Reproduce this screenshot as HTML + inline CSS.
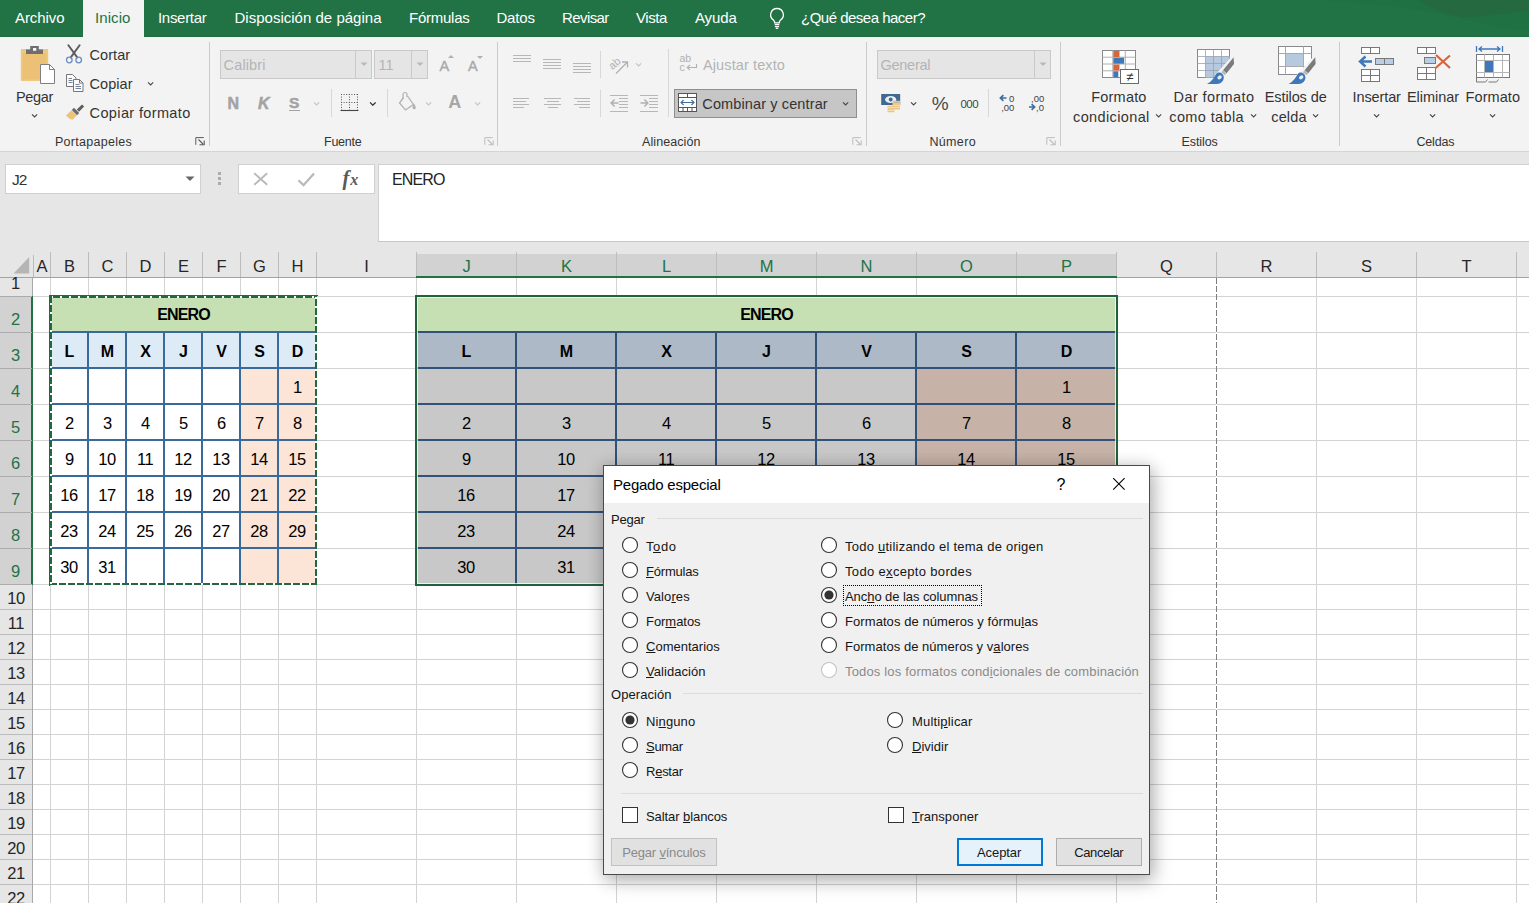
<!DOCTYPE html>
<html lang="es"><head><meta charset="utf-8"><title>Excel - Pegado especial</title><style>
html,body{margin:0;padding:0;overflow:hidden}
html{width:1529px;height:903px}
body{width:1529px;height:903px;overflow:hidden;position:relative;background:#e6e6e6;font-family:"Liberation Sans",sans-serif}
.a{position:absolute;box-sizing:border-box}
.t{position:absolute;white-space:pre;line-height:1}
u{text-decoration:underline;text-underline-offset:1px}
</style></head>
<body>
<div class="a " style="left:0px;top:0px;width:1529px;height:37px;background:#217346;"></div>
<svg class="a" style="left:1300px;top:0px" width="229" height="37" viewBox="0 0 229 37"><path d="M20 0 C60 3 100 6 140 14 C170 20 200 30 229 30 L229 0 Z" fill="#1f7044" opacity=".55"/><path d="M118 0 C130 6 140 15 165 17 C190 18 205 11 229 11 L229 0 Z" fill="#24693f"/></svg>
<div class="a " style="left:0px;top:36px;width:1529px;height:1px;background:#1f6c41;"></div>
<div class="a " style="left:83px;top:0px;width:61px;height:38px;background:#f3f3f3;"></div>
<span class="t" style="left:15.00px;top:10px;font-size:15px;color:#fff;letter-spacing:-0.074px;">Archivo</span>
<span class="t" style="left:95.00px;top:10px;font-size:15px;color:#217346;letter-spacing:0.080px;">Inicio</span>
<span class="t" style="left:158.00px;top:10px;font-size:15px;color:#fff;letter-spacing:-0.295px;">Insertar</span>
<span class="t" style="left:234.50px;top:10px;font-size:15px;color:#fff;letter-spacing:0.011px;">Disposición de página</span>
<span class="t" style="left:409.00px;top:10px;font-size:15px;color:#fff;letter-spacing:-0.252px;">Fórmulas</span>
<span class="t" style="left:496.40px;top:10px;font-size:15px;color:#fff;letter-spacing:-0.158px;">Datos</span>
<span class="t" style="left:562.00px;top:10px;font-size:15px;color:#fff;letter-spacing:-0.593px;">Revisar</span>
<span class="t" style="left:636.00px;top:10px;font-size:15px;color:#fff;letter-spacing:-0.416px;">Vista</span>
<span class="t" style="left:695.00px;top:10px;font-size:15px;color:#fff;letter-spacing:-0.133px;">Ayuda</span>
<span class="t" style="left:801.00px;top:10px;font-size:15px;color:#fff;letter-spacing:-0.506px;">¿Qué desea hacer?</span>
<svg class="a" style="left:767px;top:6px" width="20" height="24" viewBox="0 0 20 24"><path d="M10 2.5a6.3 6.3 0 0 0-3.6 11.5c.9.8 1.3 1.6 1.3 2.8h4.6c0-1.2.4-2 1.3-2.8A6.3 6.3 0 0 0 10 2.5z" fill="none" stroke="#fff" stroke-width="1.3"/><path d="M7.7 18.6h4.6M7.9 20.6h4.2M8.8 22.4h2.4" stroke="#fff" stroke-width="1.1" fill="none"/></svg>
<div class="a " style="left:0px;top:37px;width:1529px;height:114px;background:#f3f3f3;"></div>
<div class="a " style="left:0px;top:151px;width:1529px;height:1px;background:#d4d4d4;"></div>
<div class="a " style="left:209px;top:42px;width:1px;height:104px;background:#cacaca;"></div>
<div class="a " style="left:497px;top:42px;width:1px;height:104px;background:#cacaca;"></div>
<div class="a " style="left:866px;top:42px;width:1px;height:104px;background:#cacaca;"></div>
<div class="a " style="left:1060px;top:42px;width:1px;height:104px;background:#cacaca;"></div>
<div class="a " style="left:1339px;top:42px;width:1px;height:104px;background:#cacaca;"></div>
<svg class="a" style="left:19px;top:44px" width="38" height="42" viewBox="0 0 38 42"><rect x="1.8" y="5" width="27.4" height="32" rx="0.8" fill="#efc87f"/><rect x="3.5" y="9" width="24" height="26.5" fill="#ecc175"/><path d="M7 10V5.400h4.200V2h8.600v3.400H24V10z" fill="#6e6e6e"/><rect x="14" y="4" width="3.300" height="2.800" fill="#f6f6f6"/><path d="M21.500 20.500h9l5 5V39.500h-14z" fill="#fff" stroke="#7f7f7f" stroke-width="1"/><path d="M30.500 20.500v5h5" fill="none" stroke="#7f7f7f" stroke-width="1"/></svg>
<span class="t" style="left:16.00px;top:90px;font-size:14.5px;color:#333333;letter-spacing:-0.338px;">Pegar</span>
<svg class="a" style="left:31.4px;top:113.4px" width="7.2" height="5.2" viewBox="0 0 7.2 5.2"><path d="M1 1.3 L3.6 3.9 L6.2 1.3" fill="none" stroke="#444" stroke-width="1.1"/></svg>
<svg class="a" style="left:65px;top:44px" width="19" height="20" viewBox="0 0 19 20"><path d="M3.400 1.200L12.200 13.400M14.600 1.200L5.800 13.400" stroke="#5c5c5c" stroke-width="1.900" fill="none" stroke-linecap="round"/><circle cx="4.300" cy="16" r="2.800" fill="none" stroke="#6b8cc0" stroke-width="1.300"/><circle cx="13.700" cy="16" r="2.800" fill="none" stroke="#6b8cc0" stroke-width="1.300"/></svg>
<span class="t" style="left:89.60px;top:48px;font-size:14.5px;color:#333333;letter-spacing:0.036px;">Cortar</span>
<svg class="a" style="left:65px;top:73px" width="20" height="20" viewBox="0 0 20 20"><path d="M1.500 1.500h6l3.500 3.500v8.500h-9.500z" fill="#fbfbfb" stroke="#777" stroke-width="1"/><path d="M3.500 5.500h3.500M3.500 7.500h4M3.500 9.500h4" stroke="#73849a" stroke-width="1"/><path d="M8.500 6.500h6l3.500 3.500v8.500h-9.500z" fill="#fbfbfb" stroke="#777" stroke-width="1"/><path d="M14.500 6.500v3.500h3.500" fill="none" stroke="#777" stroke-width="1"/><path d="M10.500 11.500h4M10.500 13.500h5.500M10.500 15.500h5.500" stroke="#73849a" stroke-width="1"/></svg>
<span class="t" style="left:89.60px;top:77px;font-size:14.5px;color:#333333;letter-spacing:0.048px;">Copiar</span>
<svg class="a" style="left:147.4px;top:81.4px" width="7.2" height="5.2" viewBox="0 0 7.2 5.2"><path d="M1 1.3 L3.6 3.9 L6.2 1.3" fill="none" stroke="#444" stroke-width="1.1"/></svg>
<svg class="a" style="left:65px;top:103px" width="20" height="18" viewBox="0 0 20 18"><path d="M11.800 6.600l5.200-5.200 2.200 2.200-5.200 5.200z" fill="#5f5f5f"/><path d="M9 4.800l5.200 5.200-2.200 2.200-5.200-5.200z" fill="#6a6a6a"/><path d="M6.600 7.200l5.200 5.200-4.300 4.300c-2-.3-4.500-2-6.500-4.300z" fill="#ecc377"/></svg>
<span class="t" style="left:89.60px;top:106px;font-size:14.5px;color:#333333;letter-spacing:0.365px;">Copiar formato</span>
<span class="t" style="left:55.00px;top:136px;font-size:12.5px;color:#333333;letter-spacing:0.277px;">Portapapeles</span>
<svg class="a" style="left:195px;top:137px" width="10" height="9" viewBox="0 0 10 9"><path d="M0.800 7.800V0.600H8.800" fill="none" stroke="#5a5a5a" stroke-width="1"/><path d="M3.500 2.500L8 7M9.200 3.500V7.700H4.500" fill="none" stroke="#5a5a5a" stroke-width="1.100"/></svg>
<div class="a " style="left:220px;top:50px;width:152px;height:29px;background:#e5e5e5;border:1px solid #c9c9c9"></div>
<div class="a " style="left:355px;top:51px;width:1px;height:27px;background:#c9c9c9;"></div>
<span class="t" style="left:223.60px;top:58px;font-size:14.5px;color:#b4b4b4;letter-spacing:0.129px;">Calibri</span>
<svg class="a" style="left:360px;top:62px" width="8" height="5" viewBox="0 0 8 5"><path d="M0.5 0.5h7l-3.5 3.5z" fill="#b9b9b9"/></svg>
<div class="a " style="left:374px;top:50px;width:54px;height:29px;background:#e5e5e5;border:1px solid #c9c9c9"></div>
<div class="a " style="left:411px;top:51px;width:1px;height:27px;background:#c9c9c9;"></div>
<span class="t" style="left:378.50px;top:58px;font-size:14.5px;color:#b4b4b4;letter-spacing:-0.025px;">11</span>
<svg class="a" style="left:416px;top:62px" width="8" height="5" viewBox="0 0 8 5"><path d="M0.5 0.5h7l-3.5 3.5z" fill="#b9b9b9"/></svg>
<span class="t" style="left:439.50px;top:59px;font-size:14.5px;color:#a9a9a9;-webkit-text-stroke:0.4px #a9a9a9;">A</span>
<svg class="a" style="left:448px;top:55px" width="6" height="3" viewBox="0 0 6 3"><path d="M0 3L3 0L6 3z" fill="#b1b1b1"/></svg>
<span class="t" style="left:468.00px;top:59px;font-size:14.5px;color:#a9a9a9;-webkit-text-stroke:0.4px #a9a9a9;">A</span>
<svg class="a" style="left:476.5px;top:56px" width="6" height="3" viewBox="0 0 6 3"><path d="M0 0L3 3L6 0z" fill="#b1b1b1"/></svg>
<span class="t" style="left:227.50px;top:96px;font-size:16px;color:#a3a3a3;font-weight:bold;-webkit-text-stroke:0.5px #a3a3a3;">N</span>
<span class="t" style="left:258.00px;top:96px;font-size:16px;color:#a3a3a3;font-weight:bold;font-style:italic;-webkit-text-stroke:0.5px #a3a3a3;">K</span>
<span class="t" style="left:289.00px;top:95px;font-size:15.5px;color:#a3a3a3;font-weight:bold;-webkit-text-stroke:0.5px #a3a3a3;">S</span>
<div class="a " style="left:288.5px;top:109.5px;width:11px;height:1.5px;background:#a3a3a3;"></div>
<svg class="a" style="left:313.4px;top:100.9px" width="7.2" height="5.2" viewBox="0 0 7.2 5.2"><path d="M1 1.3 L3.6 3.9 L6.2 1.3" fill="none" stroke="#c4c4c4" stroke-width="1.1"/></svg>
<div class="a " style="left:331px;top:89px;width:1px;height:28px;background:#d8d8d8;"></div>
<svg class="a" style="left:340px;top:93px" width="19" height="19" viewBox="0 0 19 19"><path d="M1 1.5h17M1 9.5h17M1.5 1v17M9.5 1v17M17.5 1v17" stroke="#555" stroke-width="1" stroke-dasharray="1 1.6" fill="none"/><path d="M0.5 17.500h18" stroke="#444" stroke-width="1.100"/></svg>
<svg class="a" style="left:368.8px;top:100.7px" width="7.6" height="5.6" viewBox="0 0 7.6 5.6"><path d="M1 1.4 L3.8 4.2 L6.6 1.4" fill="none" stroke="#333" stroke-width="1.3"/></svg>
<div class="a " style="left:387px;top:89px;width:1px;height:28px;background:#d8d8d8;"></div>
<svg class="a" style="left:397px;top:91px" width="20" height="22" viewBox="0 0 20 22"><path d="M6.5 6.5l-4 5.5 6 7 8-5.5-6-8.5" fill="none" stroke="#b1b1b1" stroke-width="1.3"/><path d="M6 8V3.5a2 2 0 0 1 4 0V6" fill="none" stroke="#b1b1b1" stroke-width="1.2"/><path d="M16.8 12.5c1.4 2 2 3.2 2 4.2a1.6 1.6 0 0 1-3.2 0c0-1 .4-2.2 1.2-4.2z" fill="#b1b1b1"/></svg>
<svg class="a" style="left:424.9px;top:100.9px" width="7.2" height="5.2" viewBox="0 0 7.2 5.2"><path d="M1 1.3 L3.6 3.9 L6.2 1.3" fill="none" stroke="#c4c4c4" stroke-width="1.1"/></svg>
<span class="t" style="left:448.20px;top:93px;font-size:18px;color:#a6a6a6;font-weight:bold;">A</span>
<svg class="a" style="left:473.9px;top:100.9px" width="7.2" height="5.2" viewBox="0 0 7.2 5.2"><path d="M1 1.3 L3.6 3.9 L6.2 1.3" fill="none" stroke="#c4c4c4" stroke-width="1.1"/></svg>
<span class="t" style="left:324.00px;top:136px;font-size:12.5px;color:#333333;letter-spacing:-0.237px;">Fuente</span>
<svg class="a" style="left:484px;top:137px" width="10" height="9" viewBox="0 0 10 9"><path d="M0.800 7.800V0.600H8.800" fill="none" stroke="#bdbdbd" stroke-width="1"/><path d="M3.500 2.500L8 7M9.200 3.500V7.700H4.500" fill="none" stroke="#bdbdbd" stroke-width="1.100"/></svg>
<div class="a " style="left:513px;top:55px;width:18px;height:1px;background:#b7b7b7;"></div>
<div class="a " style="left:513px;top:58px;width:18px;height:1px;background:#b7b7b7;"></div>
<div class="a " style="left:513px;top:61px;width:18px;height:1px;background:#b7b7b7;"></div>
<div class="a " style="left:543px;top:59px;width:18px;height:1px;background:#b7b7b7;"></div>
<div class="a " style="left:543px;top:62px;width:18px;height:1px;background:#b7b7b7;"></div>
<div class="a " style="left:543px;top:65px;width:18px;height:1px;background:#b7b7b7;"></div>
<div class="a " style="left:543px;top:68px;width:18px;height:1px;background:#b7b7b7;"></div>
<div class="a " style="left:573px;top:63px;width:18px;height:1px;background:#b7b7b7;"></div>
<div class="a " style="left:573px;top:66px;width:18px;height:1px;background:#b7b7b7;"></div>
<div class="a " style="left:573px;top:69px;width:18px;height:1px;background:#b7b7b7;"></div>
<div class="a " style="left:573px;top:72px;width:18px;height:1px;background:#b7b7b7;"></div>
<div class="a " style="left:600px;top:51px;width:1px;height:27px;background:#d8d8d8;"></div>
<svg class="a" style="left:607px;top:52px" width="24" height="23" viewBox="0 0 24 23"><text x="2" y="15" font-family="Liberation Sans,sans-serif" font-size="11" fill="#b1b1b1" transform="rotate(-42 8 12)">ab</text><path d="M9 21.500L20 10.500M15 10h5.500v5.500" stroke="#b1b1b1" stroke-width="1.300" fill="none"/></svg>
<svg class="a" style="left:635.4px;top:61.9px" width="7.2" height="5.2" viewBox="0 0 7.2 5.2"><path d="M1 1.3 L3.6 3.9 L6.2 1.3" fill="none" stroke="#c4c4c4" stroke-width="1.1"/></svg>
<div class="a " style="left:668px;top:49px;width:1px;height:68px;background:#d8d8d8;"></div>
<svg class="a" style="left:679px;top:53px" width="20" height="21" viewBox="0 0 20 21"><text x="0.5" y="9" font-family="Liberation Sans,sans-serif" font-size="10.5" fill="#b1b1b1">ab</text><text x="0.5" y="18" font-family="Liberation Sans,sans-serif" font-size="10.5" fill="#b1b1b1">c</text><path d="M17.500 11v3.500h-9M11 12l-2.800 2.500 2.800 2.500" stroke="#b1b1b1" stroke-width="1.100" fill="none"/></svg>
<span class="t" style="left:703.00px;top:58px;font-size:14.5px;color:#b4b4b4;letter-spacing:0.109px;">Ajustar texto</span>
<div class="a " style="left:513px;top:98px;width:16px;height:1px;background:#b7b7b7;"></div>
<div class="a " style="left:513px;top:101px;width:13px;height:1px;background:#b7b7b7;"></div>
<div class="a " style="left:513px;top:104px;width:16px;height:1px;background:#b7b7b7;"></div>
<div class="a " style="left:513px;top:107px;width:11px;height:1px;background:#b7b7b7;"></div>
<div class="a " style="left:544px;top:98px;width:17px;height:1px;background:#b7b7b7;"></div>
<div class="a " style="left:546.5px;top:101px;width:12px;height:1px;background:#b7b7b7;"></div>
<div class="a " style="left:544px;top:104px;width:17px;height:1px;background:#b7b7b7;"></div>
<div class="a " style="left:547.5px;top:107px;width:10px;height:1px;background:#b7b7b7;"></div>
<div class="a " style="left:574px;top:98px;width:16px;height:1px;background:#b7b7b7;"></div>
<div class="a " style="left:577px;top:101px;width:13px;height:1px;background:#b7b7b7;"></div>
<div class="a " style="left:574px;top:104px;width:16px;height:1px;background:#b7b7b7;"></div>
<div class="a " style="left:579px;top:107px;width:11px;height:1px;background:#b7b7b7;"></div>
<div class="a " style="left:600px;top:90px;width:1px;height:27px;background:#d8d8d8;"></div>
<div class="a " style="left:610px;top:95px;width:18px;height:1px;background:#b7b7b7;"></div>
<div class="a " style="left:610px;top:111px;width:18px;height:1px;background:#b7b7b7;"></div>
<div class="a " style="left:619px;top:98px;width:9px;height:1px;background:#b7b7b7;"></div>
<div class="a " style="left:619px;top:101px;width:9px;height:1px;background:#b7b7b7;"></div>
<div class="a " style="left:619px;top:104px;width:9px;height:1px;background:#b7b7b7;"></div>
<div class="a " style="left:619px;top:107px;width:9px;height:1px;background:#b7b7b7;"></div>
<svg class="a" style="left:610px;top:98px" width="9" height="10" viewBox="0 0 9 10"><path d="M8.5 5H1.8M4.6 1.5L1.2 5l3.4 3.5" stroke="#b1b1b1" stroke-width="1.6" fill="none"/></svg>
<div class="a " style="left:640px;top:95px;width:18px;height:1px;background:#b7b7b7;"></div>
<div class="a " style="left:640px;top:111px;width:18px;height:1px;background:#b7b7b7;"></div>
<div class="a " style="left:649px;top:98px;width:9px;height:1px;background:#b7b7b7;"></div>
<div class="a " style="left:649px;top:101px;width:9px;height:1px;background:#b7b7b7;"></div>
<div class="a " style="left:649px;top:104px;width:9px;height:1px;background:#b7b7b7;"></div>
<div class="a " style="left:649px;top:107px;width:9px;height:1px;background:#b7b7b7;"></div>
<svg class="a" style="left:640px;top:98px" width="9" height="10" viewBox="0 0 9 10"><path d="M0.5 5h6.7M4.4 1.5L7.8 5 4.4 8.5" stroke="#b1b1b1" stroke-width="1.6" fill="none"/></svg>
<div class="a " style="left:674px;top:89px;width:183px;height:29px;background:#c6c6c6;border:1px solid #8f8f8f"></div>
<svg class="a" style="left:678px;top:93px" width="19" height="19" viewBox="0 0 19 19"><rect x="0.5" y="0.5" width="18" height="18" fill="#fff" stroke="#555" stroke-width="1"/><path d="M0.5 4.5h18M0.5 14.5h18M9.5 0.5v4M9.5 14.5v4M5 14.5v4M14 14.5v4" stroke="#555" stroke-width="1" fill="none"/><path d="M3 9.5h13M5.6 7L3 9.5 5.6 12M13.4 7L16 9.5 13.4 12" stroke="#3f6f9f" stroke-width="1.1" fill="none"/></svg>
<span class="t" style="left:702.30px;top:97px;font-size:14.5px;color:#333333;letter-spacing:0.123px;">Combinar y centrar</span>
<svg class="a" style="left:842.4px;top:100.9px" width="7.2" height="5.2" viewBox="0 0 7.2 5.2"><path d="M1 1.3 L3.6 3.9 L6.2 1.3" fill="none" stroke="#444" stroke-width="1.1"/></svg>
<span class="t" style="left:642.00px;top:136px;font-size:12.5px;color:#333333;letter-spacing:0.082px;">Alineación</span>
<svg class="a" style="left:852px;top:137px" width="10" height="9" viewBox="0 0 10 9"><path d="M0.800 7.800V0.600H8.800" fill="none" stroke="#bdbdbd" stroke-width="1"/><path d="M3.500 2.500L8 7M9.200 3.500V7.700H4.500" fill="none" stroke="#bdbdbd" stroke-width="1.100"/></svg>
<div class="a " style="left:877px;top:50px;width:174px;height:29px;background:#e5e5e5;border:1px solid #c9c9c9"></div>
<div class="a " style="left:1034px;top:51px;width:1px;height:27px;background:#c9c9c9;"></div>
<span class="t" style="left:880.60px;top:58px;font-size:14.5px;color:#b4b4b4;letter-spacing:-0.297px;">General</span>
<svg class="a" style="left:1039px;top:62px" width="8" height="5" viewBox="0 0 8 5"><path d="M0.5 0.5h7l-3.5 3.5z" fill="#b9b9b9"/></svg>
<svg class="a" style="left:880px;top:93px" width="22" height="21" viewBox="0 0 22 21"><rect x="1.200" y="1" width="19" height="11" fill="#41688f"/><ellipse cx="10.700" cy="6.500" rx="5.600" ry="3.600" fill="#e9eef4"/><circle cx="10.700" cy="6.500" r="1.900" fill="#41688f"/><path d="M12.500 8.600h7.500M12.500 11h7.500M12.500 13.400h7.500M12.500 15.600h7.500" stroke="#edc581" stroke-width="1.900"/><path d="M12.500 9.800h7.500M12.500 12.200h7.500M12.500 14.500h7.500" stroke="#f7e3bd" stroke-width="0.600"/><path d="M7.500 13.600h7M7.500 16h7M7.500 18.400h7" stroke="#edc581" stroke-width="1.900"/><path d="M7.500 14.800h7M7.500 17.200h7" stroke="#f7e3bd" stroke-width="0.600"/></svg>
<svg class="a" style="left:910.1px;top:100.9px" width="7.2" height="5.2" viewBox="0 0 7.2 5.2"><path d="M1 1.3 L3.6 3.9 L6.2 1.3" fill="none" stroke="#444" stroke-width="1.1"/></svg>
<span class="t" style="left:931.80px;top:94px;font-size:19px;color:#4a4a4a;">%</span>
<span class="t" style="left:960.40px;top:99px;font-size:11.5px;color:#444;letter-spacing:-0.528px;">000</span>
<div class="a " style="left:988px;top:89px;width:1px;height:28px;background:#d8d8d8;"></div>
<svg class="a" style="left:999px;top:94px" width="17" height="19" viewBox="0 0 17 19"><path d="M7.5 4H2M4.4 1.2L1.4 4l3 2.8" stroke="#3d6d9e" stroke-width="1.7" fill="none"/><text x="10" y="7.500" font-family="Liberation Sans,sans-serif" font-size="9.500" fill="#444">0</text><text x="2.200" y="16.600" font-family="Liberation Sans,sans-serif" font-size="9.500" fill="#444">,00</text></svg>
<svg class="a" style="left:1028px;top:94px" width="17" height="19" viewBox="0 0 17 19"><text x="3" y="7.500" font-family="Liberation Sans,sans-serif" font-size="9.500" fill="#444">,00</text><path d="M1 13h5.500M3.600 10.200l3 2.800-3 2.800" stroke="#3d6d9e" stroke-width="1.7" fill="none"/><text x="8" y="16.600" font-family="Liberation Sans,sans-serif" font-size="9.500" fill="#444">,0</text></svg>
<span class="t" style="left:929.40px;top:136px;font-size:12.5px;color:#333333;letter-spacing:0.356px;">Número</span>
<svg class="a" style="left:1046px;top:137px" width="10" height="9" viewBox="0 0 10 9"><path d="M0.800 7.800V0.600H8.800" fill="none" stroke="#bdbdbd" stroke-width="1"/><path d="M3.500 2.500L8 7M9.200 3.500V7.700H4.500" fill="none" stroke="#bdbdbd" stroke-width="1.100"/></svg>
<svg class="a" style="left:1101px;top:49px" width="40" height="36" viewBox="0 0 40 36"><rect x="1.500" y="1.500" width="33" height="27" fill="#fff" stroke="#8a8a8a" stroke-width="1"/><path d="M1.500 8.200h33M1.500 15h33M1.500 21.800h33M11.800 1.500v27M24.300 1.500v27" stroke="#b0b0b0" stroke-width="1" fill="none"/><rect x="12.300" y="2" width="6.200" height="6" fill="#d9643a"/><rect x="12.300" y="8.700" width="10.800" height="6" fill="#3f78b8"/><rect x="12.300" y="15.500" width="6.200" height="6" fill="#d9643a"/><rect x="12.300" y="22.300" width="5" height="6" fill="#3f78b8"/><rect x="19.500" y="20.500" width="18" height="14" fill="#fff" stroke="#6a6a6a" stroke-width="1"/><text x="28.800" y="32" text-anchor="middle" font-family="Liberation Sans,sans-serif" font-size="13" fill="#333">≠</text></svg>
<span class="t" style="left:1091.30px;top:90px;font-size:14.5px;color:#333333;letter-spacing:0.189px;">Formato</span>
<span class="t" style="left:1073.00px;top:110px;font-size:14.5px;color:#333333;letter-spacing:0.378px;">condicional</span>
<svg class="a" style="left:1155.4px;top:112.9px" width="7.2" height="5.2" viewBox="0 0 7.2 5.2"><path d="M1 1.3 L3.6 3.9 L6.2 1.3" fill="none" stroke="#444" stroke-width="1.1"/></svg>
<svg class="a" style="left:1196px;top:47px" width="40" height="38" viewBox="0 0 40 38"><rect x="1.500" y="2.500" width="32" height="28" fill="#fff" stroke="#8a8a8a" stroke-width="1"/><rect x="9.500" y="9.500" width="24" height="21" fill="#b7c9de"/><path d="M1.500 9.500h32M1.500 16.500h32M1.500 23.500h32M9.500 2.500v28M17.500 2.500v28M25.500 2.500v28" stroke="#97a3b0" stroke-width="1" fill="none" opacity=".8"/><path d="M19 28 L38 7 L40 7 L40 38 Z" fill="#f3f3f3"/><path d="M37.6 10.3L38 17L30.6 26.2L27 23.2 Z" fill="#7b7b7b"/><path d="M27 23.2L30.6 26.2L28.8 28.2L25.2 25.2 Z" fill="#b9b9b9"/><path d="M11 37 C15 35 18 31 20.5 26.5 C23 24.2 27.8 26.5 27.8 30.5 C27.8 34 25 37 21 37 Z" fill="#3f78b8"/><ellipse cx="23.6" cy="30.4" rx="2.300" ry="1.800" fill="#e6eef7" transform="rotate(-35 23.6 30.4)"/></svg>
<span class="t" style="left:1173.60px;top:90px;font-size:14.5px;color:#333333;letter-spacing:0.387px;">Dar formato</span>
<span class="t" style="left:1169.30px;top:110px;font-size:14.5px;color:#333333;letter-spacing:0.378px;">como tabla</span>
<svg class="a" style="left:1250.4px;top:112.9px" width="7.2" height="5.2" viewBox="0 0 7.2 5.2"><path d="M1 1.3 L3.6 3.9 L6.2 1.3" fill="none" stroke="#444" stroke-width="1.1"/></svg>
<svg class="a" style="left:1277px;top:44px" width="42" height="41" viewBox="0 0 42 41"><rect x="1.500" y="2.500" width="33" height="28" fill="#fff" stroke="#8a8a8a" stroke-width="1"/><path d="M1.500 9.500h33M1.500 22.500h33M8.500 2.500v28M26.500 2.500v28" stroke="#a9a9a9" stroke-width="1" fill="none"/><rect x="9" y="10" width="17" height="12" fill="#b7c9de"/><path d="M19.6 31 L38.6 10 L40.6 10 L40.6 41 Z" fill="#f3f3f3"/><path d="M38.2 13.3L38.6 20L31.2 29.2L27.6 26.2 Z" fill="#7b7b7b"/><path d="M27.6 26.2L31.2 29.2L29.4 31.2L25.8 28.2 Z" fill="#b9b9b9"/><path d="M11.6 40 C15.6 38 18.6 34 21.1 29.5 C23.6 27.2 28.4 29.5 28.4 33.5 C28.4 37 25.6 40 21.6 40 Z" fill="#3f78b8"/><ellipse cx="24.2" cy="33.4" rx="2.300" ry="1.800" fill="#e6eef7" transform="rotate(-35 24.2 33.4)"/></svg>
<span class="t" style="left:1264.80px;top:90px;font-size:14.5px;color:#333333;letter-spacing:-0.106px;">Estilos de</span>
<span class="t" style="left:1271.30px;top:110px;font-size:14.5px;color:#333333;letter-spacing:0.128px;">celda</span>
<svg class="a" style="left:1312.2px;top:112.9px" width="7.2" height="5.2" viewBox="0 0 7.2 5.2"><path d="M1 1.3 L3.6 3.9 L6.2 1.3" fill="none" stroke="#444" stroke-width="1.1"/></svg>
<span class="t" style="left:1181.50px;top:136px;font-size:12.5px;color:#333333;letter-spacing:-0.088px;">Estilos</span>
<svg class="a" style="left:1357px;top:46px" width="38" height="37" viewBox="0 0 38 37"><rect x="4.5" y="1.5" width="18" height="6" fill="#fff" stroke="#787878"/><path d="M13.5 1.5v6" stroke="#787878"/><rect x="18.5" y="12.5" width="18" height="6" fill="#b9cde5" stroke="#787878"/><path d="M27.5 12.5v6" stroke="#787878"/><rect x="4.5" y="23.5" width="18" height="12" fill="#fff" stroke="#787878"/><path d="M13.5 23.5v12M4.5 29.5h18" stroke="#787878" fill="none"/><path d="M15 15.5H4M8.5 10.5L3 15.5l5.500 5" stroke="#3f78b8" stroke-width="2.4" fill="none"/></svg>
<span class="t" style="left:1352.50px;top:90px;font-size:14.5px;color:#333333;letter-spacing:-0.106px;">Insertar</span>
<svg class="a" style="left:1373.4px;top:112.9px" width="7.2" height="5.2" viewBox="0 0 7.2 5.2"><path d="M1 1.3 L3.6 3.9 L6.2 1.3" fill="none" stroke="#444" stroke-width="1.1"/></svg>
<svg class="a" style="left:1416px;top:46px" width="38" height="37" viewBox="0 0 38 37"><rect x="1.500" y="1.5" width="18" height="6" fill="#fff" stroke="#787878"/><path d="M10.5 1.5v6" stroke="#787878"/><rect x="8.5" y="11.5" width="11" height="6" fill="#b9cde5" stroke="#787878"/><rect x="1.5" y="21.5" width="18" height="12" fill="#fff" stroke="#787878"/><path d="M10.5 21.5v12M1.5 27.5h18" stroke="#787878" fill="none"/><path d="M20 9l14 13M34 9.500L19 22.500" stroke="#d9643a" stroke-width="2.2" fill="none"/></svg>
<span class="t" style="left:1406.90px;top:90px;font-size:14.5px;color:#333333;letter-spacing:-0.009px;">Eliminar</span>
<svg class="a" style="left:1429.4px;top:112.9px" width="7.2" height="5.2" viewBox="0 0 7.2 5.2"><path d="M1 1.3 L3.6 3.9 L6.2 1.3" fill="none" stroke="#444" stroke-width="1.1"/></svg>
<svg class="a" style="left:1475px;top:45px" width="36" height="39" viewBox="0 0 36 39"><path d="M1.500 1v6M27.500 1v6M4 4h21M7 1.500L4 4l3 2.500M22 1.500L25 4l-3 2.500" stroke="#3f78b8" stroke-width="1.300" fill="none"/><rect x="1.500" y="9.500" width="33" height="23" fill="#fff" stroke="#787878"/><path d="M9.500 9.500v23M18.500 9.500v23M27.500 9.500v23M1.500 15.500h33M1.500 27.500h33" stroke="#b5b5b5" fill="none"/><rect x="10" y="16" width="8" height="11" fill="#3f78b8"/><path d="M1.500 32.500v4.500h9l2-2.500M13.500 37h8l2-2.500" stroke="#787878" fill="none"/></svg>
<span class="t" style="left:1465.60px;top:90px;font-size:14.5px;color:#333333;letter-spacing:0.060px;">Formato</span>
<svg class="a" style="left:1489.1px;top:112.9px" width="7.2" height="5.2" viewBox="0 0 7.2 5.2"><path d="M1 1.3 L3.6 3.9 L6.2 1.3" fill="none" stroke="#444" stroke-width="1.1"/></svg>
<span class="t" style="left:1416.40px;top:136px;font-size:12.5px;color:#333333;letter-spacing:-0.152px;">Celdas</span>
<div class="a " style="left:5px;top:164px;width:196px;height:30px;background:#fff;border:1px solid #d0d0d0"></div>
<span class="t" style="left:12.00px;top:172px;font-size:15.5px;color:#333;letter-spacing:-0.886px;">J2</span>
<svg class="a" style="left:185px;top:176px" width="10" height="6" viewBox="0 0 10 6"><path d="M0.5 0.5h9l-4.5 4.5z" fill="#666"/></svg>
<div class="a " style="left:218px;top:172px;width:3px;height:3px;background:#ababab;"></div>
<div class="a " style="left:218px;top:177px;width:3px;height:3px;background:#ababab;"></div>
<div class="a " style="left:218px;top:182px;width:3px;height:3px;background:#ababab;"></div>
<div class="a " style="left:238px;top:164px;width:137px;height:30px;background:#fff;border:1px solid #d0d0d0"></div>
<svg class="a" style="left:253px;top:172px" width="16" height="14" viewBox="0 0 16 14"><path d="M1.200 1.200l13 11.600M14.200 1.200l-13 11.600" stroke="#b9b9b9" stroke-width="1.900" fill="none"/></svg>
<svg class="a" style="left:297px;top:172px" width="19" height="15" viewBox="0 0 19 15"><path d="M1.500 8.200l5 5L17 1.500" stroke="#b9b9b9" stroke-width="2.300" fill="none"/></svg>
<span class="t" style="left:342.50px;top:168px;font-size:20.5px;color:#5a5a5a;font-weight:bold;font-style:italic;font-family:'Liberation Serif',serif;">f</span>
<span class="t" style="left:350.30px;top:172px;font-size:16px;color:#5a5a5a;font-weight:bold;font-style:italic;font-family:'Liberation Serif',serif;">x</span>
<div class="a " style="left:378px;top:164px;width:1151px;height:77px;background:#fff;border-left:1px solid #d0d0d0;border-top:1px solid #d0d0d0"></div>
<span class="t" style="left:392.00px;top:172px;font-size:16px;color:#222;letter-spacing:-0.880px;">ENERO</span>
<div class="a " style="left:0px;top:254px;width:1529px;height:649px;background:#fff;"></div>
<div class="a " style="left:0px;top:254px;width:1529px;height:24px;background:#e6e6e6;"></div>
<div class="a " style="left:0px;top:254px;width:33px;height:649px;background:#e6e6e6;"></div>
<div class="a " style="left:416px;top:254px;width:701px;height:23px;background:#d2d2d2;"></div>
<div class="a " style="left:416px;top:276px;width:701px;height:2px;background:#217346;"></div>
<div class="a " style="left:0px;top:296px;width:32px;height:289px;background:#d2d2d2;"></div>
<div class="a " style="left:31px;top:296px;width:2px;height:289px;background:#217346;"></div>
<svg class="a" style="left:12px;top:256px" width="20" height="19" viewBox="0 0 20 19"><path d="M17.2 1V17.6H1.6z" fill="#b5b5b5"/></svg>
<div class="a " style="left:50px;top:278px;width:1px;height:625px;background:#d3d3d3;"></div>
<div class="a " style="left:88px;top:278px;width:1px;height:625px;background:#d3d3d3;"></div>
<div class="a " style="left:126px;top:278px;width:1px;height:625px;background:#d3d3d3;"></div>
<div class="a " style="left:164px;top:278px;width:1px;height:625px;background:#d3d3d3;"></div>
<div class="a " style="left:202px;top:278px;width:1px;height:625px;background:#d3d3d3;"></div>
<div class="a " style="left:240px;top:278px;width:1px;height:625px;background:#d3d3d3;"></div>
<div class="a " style="left:278px;top:278px;width:1px;height:625px;background:#d3d3d3;"></div>
<div class="a " style="left:316px;top:278px;width:1px;height:625px;background:#d3d3d3;"></div>
<div class="a " style="left:416px;top:278px;width:1px;height:625px;background:#d3d3d3;"></div>
<div class="a " style="left:516px;top:278px;width:1px;height:625px;background:#d3d3d3;"></div>
<div class="a " style="left:616px;top:278px;width:1px;height:625px;background:#d3d3d3;"></div>
<div class="a " style="left:716px;top:278px;width:1px;height:625px;background:#d3d3d3;"></div>
<div class="a " style="left:816px;top:278px;width:1px;height:625px;background:#d3d3d3;"></div>
<div class="a " style="left:916px;top:278px;width:1px;height:625px;background:#d3d3d3;"></div>
<div class="a " style="left:1016px;top:278px;width:1px;height:625px;background:#d3d3d3;"></div>
<div class="a " style="left:1116px;top:278px;width:1px;height:625px;background:#d3d3d3;"></div>
<div class="a " style="left:1216px;top:278px;width:1px;height:625px;background:#d3d3d3;"></div>
<div class="a " style="left:1316px;top:278px;width:1px;height:625px;background:#d3d3d3;"></div>
<div class="a " style="left:1416px;top:278px;width:1px;height:625px;background:#d3d3d3;"></div>
<div class="a " style="left:1516px;top:278px;width:1px;height:625px;background:#d3d3d3;"></div>
<div class="a " style="left:33px;top:296px;width:1496px;height:1px;background:#d3d3d3;"></div>
<div class="a " style="left:33px;top:332px;width:1496px;height:1px;background:#d3d3d3;"></div>
<div class="a " style="left:33px;top:368px;width:1496px;height:1px;background:#d3d3d3;"></div>
<div class="a " style="left:33px;top:404px;width:1496px;height:1px;background:#d3d3d3;"></div>
<div class="a " style="left:33px;top:440px;width:1496px;height:1px;background:#d3d3d3;"></div>
<div class="a " style="left:33px;top:476px;width:1496px;height:1px;background:#d3d3d3;"></div>
<div class="a " style="left:33px;top:512px;width:1496px;height:1px;background:#d3d3d3;"></div>
<div class="a " style="left:33px;top:548px;width:1496px;height:1px;background:#d3d3d3;"></div>
<div class="a " style="left:33px;top:584px;width:1496px;height:1px;background:#d3d3d3;"></div>
<div class="a " style="left:33px;top:609px;width:1496px;height:1px;background:#d3d3d3;"></div>
<div class="a " style="left:33px;top:634px;width:1496px;height:1px;background:#d3d3d3;"></div>
<div class="a " style="left:33px;top:659px;width:1496px;height:1px;background:#d3d3d3;"></div>
<div class="a " style="left:33px;top:684px;width:1496px;height:1px;background:#d3d3d3;"></div>
<div class="a " style="left:33px;top:709px;width:1496px;height:1px;background:#d3d3d3;"></div>
<div class="a " style="left:33px;top:734px;width:1496px;height:1px;background:#d3d3d3;"></div>
<div class="a " style="left:33px;top:759px;width:1496px;height:1px;background:#d3d3d3;"></div>
<div class="a " style="left:33px;top:784px;width:1496px;height:1px;background:#d3d3d3;"></div>
<div class="a " style="left:33px;top:809px;width:1496px;height:1px;background:#d3d3d3;"></div>
<div class="a " style="left:33px;top:834px;width:1496px;height:1px;background:#d3d3d3;"></div>
<div class="a " style="left:33px;top:859px;width:1496px;height:1px;background:#d3d3d3;"></div>
<div class="a " style="left:33px;top:884px;width:1496px;height:1px;background:#d3d3d3;"></div>
<div class="a " style="left:33px;top:909px;width:1496px;height:1px;background:#d3d3d3;"></div>
<div class="a " style="left:33px;top:252px;width:1px;height:25px;background:#bcbcbc;top:255px;height:22px"></div>
<div class="a " style="left:50px;top:252px;width:1px;height:25px;background:#bcbcbc;"></div>
<div class="a " style="left:88px;top:252px;width:1px;height:25px;background:#bcbcbc;"></div>
<div class="a " style="left:126px;top:252px;width:1px;height:25px;background:#bcbcbc;"></div>
<div class="a " style="left:164px;top:252px;width:1px;height:25px;background:#bcbcbc;"></div>
<div class="a " style="left:202px;top:252px;width:1px;height:25px;background:#bcbcbc;"></div>
<div class="a " style="left:240px;top:252px;width:1px;height:25px;background:#bcbcbc;"></div>
<div class="a " style="left:278px;top:252px;width:1px;height:25px;background:#bcbcbc;"></div>
<div class="a " style="left:316px;top:252px;width:1px;height:25px;background:#bcbcbc;"></div>
<div class="a " style="left:416px;top:252px;width:1px;height:25px;background:#bcbcbc;"></div>
<div class="a " style="left:516px;top:252px;width:1px;height:25px;background:#bdbdbd;"></div>
<div class="a " style="left:616px;top:252px;width:1px;height:25px;background:#bdbdbd;"></div>
<div class="a " style="left:716px;top:252px;width:1px;height:25px;background:#bdbdbd;"></div>
<div class="a " style="left:816px;top:252px;width:1px;height:25px;background:#bdbdbd;"></div>
<div class="a " style="left:916px;top:252px;width:1px;height:25px;background:#bdbdbd;"></div>
<div class="a " style="left:1016px;top:252px;width:1px;height:25px;background:#bdbdbd;"></div>
<div class="a " style="left:1116px;top:252px;width:1px;height:25px;background:#bdbdbd;"></div>
<div class="a " style="left:1216px;top:252px;width:1px;height:25px;background:#bcbcbc;"></div>
<div class="a " style="left:1316px;top:252px;width:1px;height:25px;background:#bcbcbc;"></div>
<div class="a " style="left:1416px;top:252px;width:1px;height:25px;background:#bcbcbc;"></div>
<div class="a " style="left:1516px;top:252px;width:1px;height:25px;background:#bcbcbc;"></div>
<div class="a " style="left:0px;top:277px;width:1529px;height:1px;background:#a3a3a3;"></div>
<div class="a " style="left:378px;top:241px;width:1151px;height:1px;background:#c8c8c8;"></div>
<div class="a " style="left:416px;top:276px;width:701px;height:2px;background:#217346;"></div>
<div class="a " style="left:32px;top:278px;width:1px;height:625px;background:#a8a8a8;"></div>
<div class="a " style="left:31px;top:296px;width:2px;height:289px;background:#217346;"></div>
<div class="a " style="left:0px;top:296px;width:32px;height:1px;background:#ababab;"></div>
<div class="a " style="left:0px;top:332px;width:32px;height:1px;background:#ababab;"></div>
<div class="a " style="left:0px;top:368px;width:32px;height:1px;background:#ababab;"></div>
<div class="a " style="left:0px;top:404px;width:32px;height:1px;background:#ababab;"></div>
<div class="a " style="left:0px;top:440px;width:32px;height:1px;background:#ababab;"></div>
<div class="a " style="left:0px;top:476px;width:32px;height:1px;background:#ababab;"></div>
<div class="a " style="left:0px;top:512px;width:32px;height:1px;background:#ababab;"></div>
<div class="a " style="left:0px;top:548px;width:32px;height:1px;background:#ababab;"></div>
<div class="a " style="left:0px;top:584px;width:32px;height:1px;background:#ababab;"></div>
<div class="a " style="left:0px;top:609px;width:32px;height:1px;background:#bcbcbc;"></div>
<div class="a " style="left:0px;top:634px;width:32px;height:1px;background:#bcbcbc;"></div>
<div class="a " style="left:0px;top:659px;width:32px;height:1px;background:#bcbcbc;"></div>
<div class="a " style="left:0px;top:684px;width:32px;height:1px;background:#bcbcbc;"></div>
<div class="a " style="left:0px;top:709px;width:32px;height:1px;background:#bcbcbc;"></div>
<div class="a " style="left:0px;top:734px;width:32px;height:1px;background:#bcbcbc;"></div>
<div class="a " style="left:0px;top:759px;width:32px;height:1px;background:#bcbcbc;"></div>
<div class="a " style="left:0px;top:784px;width:32px;height:1px;background:#bcbcbc;"></div>
<div class="a " style="left:0px;top:809px;width:32px;height:1px;background:#bcbcbc;"></div>
<div class="a " style="left:0px;top:834px;width:32px;height:1px;background:#bcbcbc;"></div>
<div class="a " style="left:0px;top:859px;width:32px;height:1px;background:#bcbcbc;"></div>
<div class="a " style="left:0px;top:884px;width:32px;height:1px;background:#bcbcbc;"></div>
<div class="a " style="left:0px;top:909px;width:32px;height:1px;background:#bcbcbc;"></div>
<span class="t" style="left:36.50px;top:258px;font-size:16.5px;color:#262626;">A</span>
<span class="t" style="left:64.00px;top:258px;font-size:16.5px;color:#262626;">B</span>
<span class="t" style="left:101.54px;top:258px;font-size:16.5px;color:#262626;">C</span>
<span class="t" style="left:139.54px;top:258px;font-size:16.5px;color:#262626;">D</span>
<span class="t" style="left:178.00px;top:258px;font-size:16.5px;color:#262626;">E</span>
<span class="t" style="left:216.46px;top:258px;font-size:16.5px;color:#262626;">F</span>
<span class="t" style="left:253.08px;top:258px;font-size:16.5px;color:#262626;">G</span>
<span class="t" style="left:291.54px;top:258px;font-size:16.5px;color:#262626;">H</span>
<span class="t" style="left:364.21px;top:258px;font-size:16.5px;color:#262626;">I</span>
<span class="t" style="left:462.38px;top:258px;font-size:16.5px;color:#217346;">J</span>
<span class="t" style="left:561.00px;top:258px;font-size:16.5px;color:#217346;">K</span>
<span class="t" style="left:661.91px;top:258px;font-size:16.5px;color:#217346;">L</span>
<span class="t" style="left:759.63px;top:258px;font-size:16.5px;color:#217346;">M</span>
<span class="t" style="left:860.54px;top:258px;font-size:16.5px;color:#217346;">N</span>
<span class="t" style="left:960.08px;top:258px;font-size:16.5px;color:#217346;">O</span>
<span class="t" style="left:1061.00px;top:258px;font-size:16.5px;color:#217346;">P</span>
<span class="t" style="left:1160.08px;top:258px;font-size:16.5px;color:#262626;">Q</span>
<span class="t" style="left:1260.54px;top:258px;font-size:16.5px;color:#262626;">R</span>
<span class="t" style="left:1361.00px;top:258px;font-size:16.5px;color:#262626;">S</span>
<span class="t" style="left:1461.46px;top:258px;font-size:16.5px;color:#262626;">T</span>
<span class="t" style="left:1560.54px;top:258px;font-size:16.5px;color:#262626;">U</span>
<span class="t" style="left:11.11px;top:275px;font-size:16.5px;color:#262626;">1</span>
<span class="t" style="left:11.11px;top:311px;font-size:16.5px;color:#217346;">2</span>
<span class="t" style="left:11.11px;top:347px;font-size:16.5px;color:#217346;">3</span>
<span class="t" style="left:11.11px;top:383px;font-size:16.5px;color:#217346;">4</span>
<span class="t" style="left:11.11px;top:419px;font-size:16.5px;color:#217346;">5</span>
<span class="t" style="left:11.11px;top:455px;font-size:16.5px;color:#217346;">6</span>
<span class="t" style="left:11.11px;top:491px;font-size:16.5px;color:#217346;">7</span>
<span class="t" style="left:11.11px;top:527px;font-size:16.5px;color:#217346;">8</span>
<span class="t" style="left:11.11px;top:563px;font-size:16.5px;color:#217346;">9</span>
<span class="t" style="left:7.22px;top:590px;font-size:16.5px;color:#262626;letter-spacing:-0.5px;">10</span>
<span class="t" style="left:7.84px;top:615px;font-size:16.5px;color:#262626;letter-spacing:-0.5px;">11</span>
<span class="t" style="left:7.22px;top:640px;font-size:16.5px;color:#262626;letter-spacing:-0.5px;">12</span>
<span class="t" style="left:7.22px;top:665px;font-size:16.5px;color:#262626;letter-spacing:-0.5px;">13</span>
<span class="t" style="left:7.22px;top:690px;font-size:16.5px;color:#262626;letter-spacing:-0.5px;">14</span>
<span class="t" style="left:7.22px;top:715px;font-size:16.5px;color:#262626;letter-spacing:-0.5px;">15</span>
<span class="t" style="left:7.22px;top:740px;font-size:16.5px;color:#262626;letter-spacing:-0.5px;">16</span>
<span class="t" style="left:7.22px;top:765px;font-size:16.5px;color:#262626;letter-spacing:-0.5px;">17</span>
<span class="t" style="left:7.22px;top:790px;font-size:16.5px;color:#262626;letter-spacing:-0.5px;">18</span>
<span class="t" style="left:7.22px;top:815px;font-size:16.5px;color:#262626;letter-spacing:-0.5px;">19</span>
<span class="t" style="left:7.22px;top:840px;font-size:16.5px;color:#262626;letter-spacing:-0.5px;">20</span>
<span class="t" style="left:7.22px;top:865px;font-size:16.5px;color:#262626;letter-spacing:-0.5px;">21</span>
<span class="t" style="left:7.22px;top:890px;font-size:16.5px;color:#262626;letter-spacing:-0.5px;">22</span>
<div class="a" style="left:1216px;top:278px;width:1px;height:625px;background:repeating-linear-gradient(to bottom,#7d7d7d 0 6px,#fff 6px 8px)"></div>
<div class="a " style="left:50px;top:296px;width:266px;height:36px;background:#c6e0b4;"></div>
<div class="a " style="left:50px;top:332px;width:266px;height:36px;background:#ddebf7;"></div>
<div class="a " style="left:50px;top:368px;width:190px;height:216px;background:#ffffff;"></div>
<div class="a " style="left:240px;top:368px;width:76px;height:216px;background:#fce4d6;"></div>
<div class="a " style="left:50px;top:331px;width:266px;height:2px;background:#386a9c;"></div>
<div class="a " style="left:50px;top:367px;width:266px;height:2px;background:#386a9c;"></div>
<div class="a " style="left:50px;top:403px;width:266px;height:2px;background:#386a9c;"></div>
<div class="a " style="left:50px;top:439px;width:266px;height:2px;background:#386a9c;"></div>
<div class="a " style="left:50px;top:475px;width:266px;height:2px;background:#386a9c;"></div>
<div class="a " style="left:50px;top:511px;width:266px;height:2px;background:#386a9c;"></div>
<div class="a " style="left:50px;top:547px;width:266px;height:2px;background:#386a9c;"></div>
<div class="a " style="left:87px;top:332px;width:2px;height:252px;background:#386a9c;"></div>
<div class="a " style="left:125px;top:332px;width:2px;height:252px;background:#386a9c;"></div>
<div class="a " style="left:163px;top:332px;width:2px;height:252px;background:#386a9c;"></div>
<div class="a " style="left:201px;top:332px;width:2px;height:252px;background:#386a9c;"></div>
<div class="a " style="left:239px;top:332px;width:2px;height:252px;background:#386a9c;"></div>
<div class="a " style="left:277px;top:332px;width:2px;height:252px;background:#386a9c;"></div>
<span class="t" style="left:157.25px;top:307px;font-size:16px;color:#000;letter-spacing:-0.880px;font-weight:bold;">ENERO</span>
<span class="t" style="left:64.61px;top:344px;font-size:16px;color:#000;font-weight:bold;">L</span>
<span class="t" style="left:100.84px;top:344px;font-size:16px;color:#000;font-weight:bold;">M</span>
<span class="t" style="left:140.16px;top:344px;font-size:16px;color:#000;font-weight:bold;">X</span>
<span class="t" style="left:179.05px;top:344px;font-size:16px;color:#000;font-weight:bold;">J</span>
<span class="t" style="left:216.16px;top:344px;font-size:16px;color:#000;font-weight:bold;">V</span>
<span class="t" style="left:254.16px;top:344px;font-size:16px;color:#000;font-weight:bold;">S</span>
<span class="t" style="left:291.72px;top:344px;font-size:16px;color:#000;font-weight:bold;">D</span>
<span class="t" style="left:292.91px;top:379px;font-size:16.5px;color:#000;">1</span>
<span class="t" style="left:64.91px;top:415px;font-size:16.5px;color:#000;">2</span>
<span class="t" style="left:102.91px;top:415px;font-size:16.5px;color:#000;">3</span>
<span class="t" style="left:140.91px;top:415px;font-size:16.5px;color:#000;">4</span>
<span class="t" style="left:178.91px;top:415px;font-size:16.5px;color:#000;">5</span>
<span class="t" style="left:216.91px;top:415px;font-size:16.5px;color:#000;">6</span>
<span class="t" style="left:254.91px;top:415px;font-size:16.5px;color:#000;">7</span>
<span class="t" style="left:292.91px;top:415px;font-size:16.5px;color:#000;">8</span>
<span class="t" style="left:64.91px;top:451px;font-size:16.5px;color:#000;">9</span>
<span class="t" style="left:98.32px;top:451px;font-size:16.5px;color:#000;letter-spacing:-0.5px;">10</span>
<span class="t" style="left:136.94px;top:451px;font-size:16.5px;color:#000;letter-spacing:-0.5px;">11</span>
<span class="t" style="left:174.32px;top:451px;font-size:16.5px;color:#000;letter-spacing:-0.5px;">12</span>
<span class="t" style="left:212.32px;top:451px;font-size:16.5px;color:#000;letter-spacing:-0.5px;">13</span>
<span class="t" style="left:250.32px;top:451px;font-size:16.5px;color:#000;letter-spacing:-0.5px;">14</span>
<span class="t" style="left:288.32px;top:451px;font-size:16.5px;color:#000;letter-spacing:-0.5px;">15</span>
<span class="t" style="left:60.32px;top:487px;font-size:16.5px;color:#000;letter-spacing:-0.5px;">16</span>
<span class="t" style="left:98.32px;top:487px;font-size:16.5px;color:#000;letter-spacing:-0.5px;">17</span>
<span class="t" style="left:136.32px;top:487px;font-size:16.5px;color:#000;letter-spacing:-0.5px;">18</span>
<span class="t" style="left:174.32px;top:487px;font-size:16.5px;color:#000;letter-spacing:-0.5px;">19</span>
<span class="t" style="left:212.32px;top:487px;font-size:16.5px;color:#000;letter-spacing:-0.5px;">20</span>
<span class="t" style="left:250.32px;top:487px;font-size:16.5px;color:#000;letter-spacing:-0.5px;">21</span>
<span class="t" style="left:288.32px;top:487px;font-size:16.5px;color:#000;letter-spacing:-0.5px;">22</span>
<span class="t" style="left:60.32px;top:523px;font-size:16.5px;color:#000;letter-spacing:-0.5px;">23</span>
<span class="t" style="left:98.32px;top:523px;font-size:16.5px;color:#000;letter-spacing:-0.5px;">24</span>
<span class="t" style="left:136.32px;top:523px;font-size:16.5px;color:#000;letter-spacing:-0.5px;">25</span>
<span class="t" style="left:174.32px;top:523px;font-size:16.5px;color:#000;letter-spacing:-0.5px;">26</span>
<span class="t" style="left:212.32px;top:523px;font-size:16.5px;color:#000;letter-spacing:-0.5px;">27</span>
<span class="t" style="left:250.32px;top:523px;font-size:16.5px;color:#000;letter-spacing:-0.5px;">28</span>
<span class="t" style="left:288.32px;top:523px;font-size:16.5px;color:#000;letter-spacing:-0.5px;">29</span>
<span class="t" style="left:60.32px;top:559px;font-size:16.5px;color:#000;letter-spacing:-0.5px;">30</span>
<span class="t" style="left:98.32px;top:559px;font-size:16.5px;color:#000;letter-spacing:-0.5px;">31</span>
<div class="a " style="left:49px;top:295px;width:269px;height:1px;background:#23693f;"></div>
<div class="a " style="left:49px;top:295px;width:1px;height:291px;background:#23693f;"></div>
<div class="a" style="left:50px;top:296px;width:267px;height:2px;background:repeating-linear-gradient(to right,#23693f 0 1px,#fff 1px 3px,#23693f 3px 9px)"></div>
<div class="a" style="left:50px;top:583px;width:267px;height:2px;background:repeating-linear-gradient(to right,#23693f 0 7px,#fff 7px 9px,#23693f 9px 9px)"></div>
<div class="a" style="left:50px;top:296px;width:2px;height:289px;background:repeating-linear-gradient(to bottom,#23693f 0 7px,#fff 7px 9px,#23693f 9px 9px)"></div>
<div class="a" style="left:315px;top:296px;width:2px;height:289px;background:repeating-linear-gradient(to bottom,#23693f 0 1px,#fff 1px 3px,#23693f 3px 9px)"></div>
<div class="a " style="left:416px;top:296px;width:700px;height:36px;background:#c6e0b4;"></div>
<div class="a " style="left:416px;top:332px;width:700px;height:36px;background:#adb9c6;"></div>
<div class="a " style="left:416px;top:368px;width:500px;height:216px;background:#c8c8c8;"></div>
<div class="a " style="left:916px;top:368px;width:200px;height:216px;background:#c6b2a6;"></div>
<div class="a " style="left:416px;top:331px;width:700px;height:2px;background:#30527a;"></div>
<div class="a " style="left:416px;top:367px;width:700px;height:2px;background:#30527a;"></div>
<div class="a " style="left:416px;top:403px;width:700px;height:2px;background:#30527a;"></div>
<div class="a " style="left:416px;top:439px;width:700px;height:2px;background:#30527a;"></div>
<div class="a " style="left:416px;top:475px;width:700px;height:2px;background:#30527a;"></div>
<div class="a " style="left:416px;top:511px;width:700px;height:2px;background:#30527a;"></div>
<div class="a " style="left:416px;top:547px;width:700px;height:2px;background:#30527a;"></div>
<div class="a " style="left:515px;top:332px;width:2px;height:252px;background:#30527a;"></div>
<div class="a " style="left:615px;top:332px;width:2px;height:252px;background:#30527a;"></div>
<div class="a " style="left:715px;top:332px;width:2px;height:252px;background:#30527a;"></div>
<div class="a " style="left:815px;top:332px;width:2px;height:252px;background:#30527a;"></div>
<div class="a " style="left:915px;top:332px;width:2px;height:252px;background:#30527a;"></div>
<div class="a " style="left:1015px;top:332px;width:2px;height:252px;background:#30527a;"></div>
<span class="t" style="left:740.25px;top:307px;font-size:16px;color:#000;letter-spacing:-0.880px;font-weight:bold;">ENERO</span>
<span class="t" style="left:461.61px;top:344px;font-size:16px;color:#000;font-weight:bold;">L</span>
<span class="t" style="left:559.84px;top:344px;font-size:16px;color:#000;font-weight:bold;">M</span>
<span class="t" style="left:661.16px;top:344px;font-size:16px;color:#000;font-weight:bold;">X</span>
<span class="t" style="left:762.05px;top:344px;font-size:16px;color:#000;font-weight:bold;">J</span>
<span class="t" style="left:861.16px;top:344px;font-size:16px;color:#000;font-weight:bold;">V</span>
<span class="t" style="left:961.16px;top:344px;font-size:16px;color:#000;font-weight:bold;">S</span>
<span class="t" style="left:1060.72px;top:344px;font-size:16px;color:#000;font-weight:bold;">D</span>
<span class="t" style="left:1061.91px;top:379px;font-size:16.5px;color:#000;">1</span>
<span class="t" style="left:461.91px;top:415px;font-size:16.5px;color:#000;">2</span>
<span class="t" style="left:561.91px;top:415px;font-size:16.5px;color:#000;">3</span>
<span class="t" style="left:661.91px;top:415px;font-size:16.5px;color:#000;">4</span>
<span class="t" style="left:761.91px;top:415px;font-size:16.5px;color:#000;">5</span>
<span class="t" style="left:861.91px;top:415px;font-size:16.5px;color:#000;">6</span>
<span class="t" style="left:961.91px;top:415px;font-size:16.5px;color:#000;">7</span>
<span class="t" style="left:1061.91px;top:415px;font-size:16.5px;color:#000;">8</span>
<span class="t" style="left:461.91px;top:451px;font-size:16.5px;color:#000;">9</span>
<span class="t" style="left:557.32px;top:451px;font-size:16.5px;color:#000;letter-spacing:-0.5px;">10</span>
<span class="t" style="left:657.94px;top:451px;font-size:16.5px;color:#000;letter-spacing:-0.5px;">11</span>
<span class="t" style="left:757.32px;top:451px;font-size:16.5px;color:#000;letter-spacing:-0.5px;">12</span>
<span class="t" style="left:857.32px;top:451px;font-size:16.5px;color:#000;letter-spacing:-0.5px;">13</span>
<span class="t" style="left:957.32px;top:451px;font-size:16.5px;color:#000;letter-spacing:-0.5px;">14</span>
<span class="t" style="left:1057.32px;top:451px;font-size:16.5px;color:#000;letter-spacing:-0.5px;">15</span>
<span class="t" style="left:457.32px;top:487px;font-size:16.5px;color:#000;letter-spacing:-0.5px;">16</span>
<span class="t" style="left:557.32px;top:487px;font-size:16.5px;color:#000;letter-spacing:-0.5px;">17</span>
<span class="t" style="left:657.32px;top:487px;font-size:16.5px;color:#000;letter-spacing:-0.5px;">18</span>
<span class="t" style="left:757.32px;top:487px;font-size:16.5px;color:#000;letter-spacing:-0.5px;">19</span>
<span class="t" style="left:857.32px;top:487px;font-size:16.5px;color:#000;letter-spacing:-0.5px;">20</span>
<span class="t" style="left:957.32px;top:487px;font-size:16.5px;color:#000;letter-spacing:-0.5px;">21</span>
<span class="t" style="left:1057.32px;top:487px;font-size:16.5px;color:#000;letter-spacing:-0.5px;">22</span>
<span class="t" style="left:457.32px;top:523px;font-size:16.5px;color:#000;letter-spacing:-0.5px;">23</span>
<span class="t" style="left:557.32px;top:523px;font-size:16.5px;color:#000;letter-spacing:-0.5px;">24</span>
<span class="t" style="left:657.32px;top:523px;font-size:16.5px;color:#000;letter-spacing:-0.5px;">25</span>
<span class="t" style="left:757.32px;top:523px;font-size:16.5px;color:#000;letter-spacing:-0.5px;">26</span>
<span class="t" style="left:857.32px;top:523px;font-size:16.5px;color:#000;letter-spacing:-0.5px;">27</span>
<span class="t" style="left:957.32px;top:523px;font-size:16.5px;color:#000;letter-spacing:-0.5px;">28</span>
<span class="t" style="left:1057.32px;top:523px;font-size:16.5px;color:#000;letter-spacing:-0.5px;">29</span>
<span class="t" style="left:457.32px;top:559px;font-size:16.5px;color:#000;letter-spacing:-0.5px;">30</span>
<span class="t" style="left:557.32px;top:559px;font-size:16.5px;color:#000;letter-spacing:-0.5px;">31</span>
<div class="a " style="left:415px;top:295px;width:703px;height:291px;border:2px solid #1f633c;outline:1px solid rgba(255,255,255,.75);outline-offset:-3px"></div>
<div class="a " style="left:603px;top:465px;width:547px;height:410px;background:#f0f0f0;border:1px solid #4a4a4a;box-shadow:0 2px 16px 1px rgba(0,0,0,.20),5px 7px 18px rgba(0,0,0,.17)"></div>
<div class="a " style="left:604px;top:466px;width:545px;height:37px;background:#fff;"></div>
<span class="t" style="left:613.00px;top:477px;font-size:15px;color:#000;letter-spacing:-0.229px;">Pegado especial</span>
<span class="t" style="left:1056.55px;top:477px;font-size:16px;color:#000;">?</span>
<svg class="a" style="left:1112px;top:477px" width="14" height="14" viewBox="0 0 14 14"><path d="M1.2 1.2l11.4 11.4M12.6 1.2L1.2 12.6" stroke="#000" stroke-width="1.1" fill="none"/></svg>
<span class="t" style="left:611.00px;top:513px;font-size:13px;color:#151515;letter-spacing:-0.188px;">Pegar</span>
<div class="a " style="left:657px;top:518px;width:486px;height:1px;background:#dcdcdc;"></div>
<span class="t" style="left:611.00px;top:688px;font-size:13px;color:#151515;letter-spacing:0.058px;">Operación</span>
<div class="a " style="left:683px;top:693px;width:460px;height:1px;background:#dcdcdc;"></div>
<div class="a " style="left:621px;top:793px;width:522px;height:1px;background:#dcdcdc;"></div>
<svg class="a" style="left:621px;top:536px" width="18" height="18" viewBox="0 0 18 18"><circle cx="9" cy="9" r="7.5" fill="#fff" stroke="#333" stroke-width="1.1"/></svg>
<span class="t" style="left:646.00px;top:540px;font-size:13px;color:#151515;letter-spacing:0.577px;">T<u>o</u>do</span>
<svg class="a" style="left:621px;top:561px" width="18" height="18" viewBox="0 0 18 18"><circle cx="9" cy="9" r="7.5" fill="#fff" stroke="#333" stroke-width="1.1"/></svg>
<span class="t" style="left:646.00px;top:565px;font-size:13px;color:#151515;letter-spacing:-0.209px;"><u>F</u>órmulas</span>
<svg class="a" style="left:621px;top:586px" width="18" height="18" viewBox="0 0 18 18"><circle cx="9" cy="9" r="7.5" fill="#fff" stroke="#333" stroke-width="1.1"/></svg>
<span class="t" style="left:646.00px;top:590px;font-size:13px;color:#151515;letter-spacing:0.091px;">Valo<u>r</u>es</span>
<svg class="a" style="left:621px;top:611px" width="18" height="18" viewBox="0 0 18 18"><circle cx="9" cy="9" r="7.5" fill="#fff" stroke="#333" stroke-width="1.1"/></svg>
<span class="t" style="left:646.00px;top:615px;font-size:13px;color:#151515;letter-spacing:-0.050px;">For<u>m</u>atos</span>
<svg class="a" style="left:621px;top:636px" width="18" height="18" viewBox="0 0 18 18"><circle cx="9" cy="9" r="7.5" fill="#fff" stroke="#333" stroke-width="1.1"/></svg>
<span class="t" style="left:646.00px;top:640px;font-size:13px;color:#151515;letter-spacing:0.005px;"><u>C</u>omentarios</span>
<svg class="a" style="left:621px;top:661px" width="18" height="18" viewBox="0 0 18 18"><circle cx="9" cy="9" r="7.5" fill="#fff" stroke="#333" stroke-width="1.1"/></svg>
<span class="t" style="left:646.00px;top:665px;font-size:13px;color:#151515;letter-spacing:0.048px;"><u>V</u>alidación</span>
<svg class="a" style="left:820px;top:536px" width="18" height="18" viewBox="0 0 18 18"><circle cx="9" cy="9" r="7.5" fill="#fff" stroke="#333" stroke-width="1.1"/></svg>
<span class="t" style="left:845.00px;top:540px;font-size:13px;color:#151515;letter-spacing:0.233px;">Todo <u>u</u>tilizando el tema de origen</span>
<svg class="a" style="left:820px;top:561px" width="18" height="18" viewBox="0 0 18 18"><circle cx="9" cy="9" r="7.5" fill="#fff" stroke="#333" stroke-width="1.1"/></svg>
<span class="t" style="left:845.00px;top:565px;font-size:13px;color:#151515;letter-spacing:0.331px;">Todo e<u>x</u>cepto bordes</span>
<svg class="a" style="left:820px;top:586px" width="18" height="18" viewBox="0 0 18 18"><circle cx="9" cy="9" r="7.5" fill="#fff" stroke="#333" stroke-width="1.1"/><circle cx="9" cy="9" r="4.6" fill="#333"/></svg>
<span class="t" style="left:845.00px;top:590px;font-size:13px;color:#151515;letter-spacing:-0.068px;">Anc<u>h</u>o de las columnas</span>
<svg class="a" style="left:820px;top:611px" width="18" height="18" viewBox="0 0 18 18"><circle cx="9" cy="9" r="7.5" fill="#fff" stroke="#333" stroke-width="1.1"/></svg>
<span class="t" style="left:845.00px;top:615px;font-size:13px;color:#151515;letter-spacing:0.075px;">Formatos de números y fórmu<u>l</u>as</span>
<svg class="a" style="left:820px;top:636px" width="18" height="18" viewBox="0 0 18 18"><circle cx="9" cy="9" r="7.5" fill="#fff" stroke="#333" stroke-width="1.1"/></svg>
<span class="t" style="left:845.00px;top:640px;font-size:13px;color:#151515;letter-spacing:0.041px;">Formatos de números y v<u>a</u>lores</span>
<svg class="a" style="left:820px;top:661px" width="18" height="18" viewBox="0 0 18 18"><circle cx="9" cy="9" r="7.5" fill="#fff" stroke="#c3c3c3" stroke-width="1.1"/></svg>
<span class="t" style="left:845.00px;top:665px;font-size:13px;color:#8a8a8a;letter-spacing:0.167px;">Todos los formatos cond<u>i</u>cionales de combinación</span>
<div class="a " style="left:843px;top:585px;width:139px;height:21px;border:1px dotted #000"></div>
<svg class="a" style="left:621px;top:711px" width="18" height="18" viewBox="0 0 18 18"><circle cx="9" cy="9" r="7.5" fill="#fff" stroke="#333" stroke-width="1.1"/><circle cx="9" cy="9" r="4.6" fill="#333"/></svg>
<span class="t" style="left:646.00px;top:715px;font-size:13px;color:#151515;letter-spacing:0.118px;">Ni<u>n</u>guno</span>
<svg class="a" style="left:621px;top:736px" width="18" height="18" viewBox="0 0 18 18"><circle cx="9" cy="9" r="7.5" fill="#fff" stroke="#333" stroke-width="1.1"/></svg>
<span class="t" style="left:646.00px;top:740px;font-size:13px;color:#151515;letter-spacing:-0.308px;"><u>S</u>umar</span>
<svg class="a" style="left:621px;top:761px" width="18" height="18" viewBox="0 0 18 18"><circle cx="9" cy="9" r="7.5" fill="#fff" stroke="#333" stroke-width="1.1"/></svg>
<span class="t" style="left:646.00px;top:765px;font-size:13px;color:#151515;letter-spacing:-0.257px;">R<u>e</u>star</span>
<svg class="a" style="left:886px;top:711px" width="18" height="18" viewBox="0 0 18 18"><circle cx="9" cy="9" r="7.5" fill="#fff" stroke="#333" stroke-width="1.1"/></svg>
<span class="t" style="left:912.00px;top:715px;font-size:13px;color:#151515;letter-spacing:0.181px;">Multi<u>p</u>licar</span>
<svg class="a" style="left:886px;top:736px" width="18" height="18" viewBox="0 0 18 18"><circle cx="9" cy="9" r="7.5" fill="#fff" stroke="#333" stroke-width="1.1"/></svg>
<span class="t" style="left:912.00px;top:740px;font-size:13px;color:#151515;letter-spacing:0.021px;"><u>D</u>ividir</span>
<div class="a " style="left:622px;top:807px;width:16px;height:16px;background:#fff;border:1px solid #333"></div>
<span class="t" style="left:646.00px;top:810px;font-size:13px;color:#151515;letter-spacing:-0.081px;">Saltar <u>b</u>lancos</span>
<div class="a " style="left:888px;top:807px;width:16px;height:16px;background:#fff;border:1px solid #333"></div>
<span class="t" style="left:912.00px;top:810px;font-size:13px;color:#151515;letter-spacing:0.025px;"><u>T</u>ransponer</span>
<div class="a " style="left:611px;top:838px;width:106px;height:28px;background:#e1e1e1;border:1px solid #c2c2c2"></div>
<span class="t" style="left:622.25px;top:846px;font-size:13px;color:#8a8a8a;letter-spacing:-0.196px;">Pegar <u>v</u>ínculos</span>
<div class="a " style="left:957px;top:838px;width:86px;height:28px;background:#e5f1fb;border:2px solid #0078d7"></div>
<span class="t" style="left:977.00px;top:846px;font-size:13px;color:#151515;letter-spacing:-0.079px;">Aceptar</span>
<div class="a " style="left:1056px;top:838px;width:86px;height:28px;background:#e1e1e1;border:1px solid #adadad"></div>
<span class="t" style="left:1074.25px;top:846px;font-size:13px;color:#151515;letter-spacing:-0.378px;">Cancelar</span>
</body></html>
